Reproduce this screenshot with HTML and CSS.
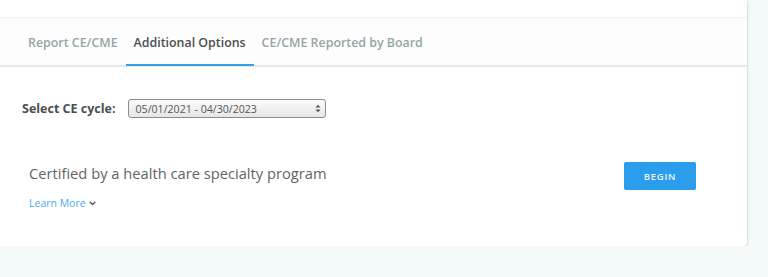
FILE: index.html
```html
<!DOCTYPE html>
<html>
<head>
<meta charset="utf-8">
<link rel="stylesheet" href="styles.css">
</head>
<body>
<div class="card">
  <div class="card-top"></div>
  <nav class="tabs">
    <a class="tab">Report CE/CME</a>
    <a class="tab active">Additional Options</a>
    <a class="tab">CE/CME Reported by Board</a>
  </nav>
  <div class="body">
    <div class="cycle">
      <label class="cycle-label">Select CE cycle:</label>
      <div class="select">
        <span>05/01/2021 - 04/30/2023</span>
        <svg class="arrows" width="6" height="9" viewBox="0 0 6 9"><path d="M0.5 3.5 L3 0.8 L5.5 3.5 Z M0.5 5.5 L3 8.2 L5.5 5.5 Z" fill="#555"/></svg>
      </div>
    </div>
    <div class="option">
      <div class="option-text">
        <h2 class="option-title">Certified by a health care specialty program</h2>
        <a class="learn">Learn More <svg width="7" height="5" viewBox="0 0 7 5"><path d="M0.8 0.8 L3.5 3.6 L6.2 0.8" fill="none" stroke="#555" stroke-width="1.4"/></svg></a>
      </div>
      <button class="begin">BEGIN</button>
    </div>
  </div>
</div>
</body>
</html>
```

FILE: styles.css
```css
html, body {
  margin: 0;
  padding: 0;
  background: #f4f9f9;
  font-family: "Open Sans", "Liberation Sans", sans-serif;
}
.card {
  width: 747px;
  height: 246px;
  background: #fff;
  border-bottom-right-radius: 4px;
  box-shadow: 1px 1px 2px rgba(0,0,0,0.12);
  display: flex;
  flex-direction: column;
}
.card-top {
  height: 17px;
  border-bottom: 1px solid #eef1f1;
}
.tabs {
  height: 47px;
  background: #fdfdfd;
  border-bottom: 2px solid #e3e9e9;
  display: flex;
  align-items: stretch;
  padding-left: 20px;
}
.tab {
  padding: 0 8px;
  font-size: 12.4px;
  font-weight: 600;
  color: #93a6a6;
  display: flex;
  align-items: center;
  padding-top: 2px;
  box-sizing: border-box;
  border-bottom: 2px solid transparent;
  margin-bottom: -1px;
}
.tab.active {
  color: #4a4f52;
  border-bottom-color: #3a9de6;
}
.body {
  flex: 1;
  padding: 32px 22px 0 22px;
}
.cycle {
  display: flex;
  align-items: center;
  gap: 12px;
}
.cycle-label {
  font-size: 12.5px;
  font-weight: 700;
  color: #4b4f52;
}
.select {
  height: 17px;
  box-sizing: content-box;
  border: 1px solid #8c8c8c;
  border-radius: 3px;
  background: linear-gradient(#fbfbfb, #e6e6e6);
  display: flex;
  align-items: center;
  justify-content: space-between;
  padding: 0 4px 0 7px;
  font-size: 10.6px;
  color: #555;
  width: 185px;
}
.arrows { display: block; }
.option {
  display: flex;
  justify-content: space-between;
  align-items: flex-start;
  margin-top: 44px;
  padding-left: 7px;
  padding-right: 29px;
}
.option-title {
  margin: 0;
  font-size: 14.7px;
  font-weight: 400;
  color: #5f6467;
  line-height: 22px;
}
.learn {
  display: inline-flex;
  align-items: center;
  gap: 3px;
  margin-top: 12px;
  font-size: 10.5px;
  color: #4aa9ee;
}
.begin {
  width: 72px;
  height: 28px;
  margin-top: 0;
  border: none;
  border-radius: 2px;
  background: #2a9ded;
  color: #eaf5fd;
  font-family: "Open Sans", "Liberation Sans", sans-serif;
  font-size: 9.5px;
  font-weight: 600;
  letter-spacing: 0.7px;
  padding: 0;
}
```
